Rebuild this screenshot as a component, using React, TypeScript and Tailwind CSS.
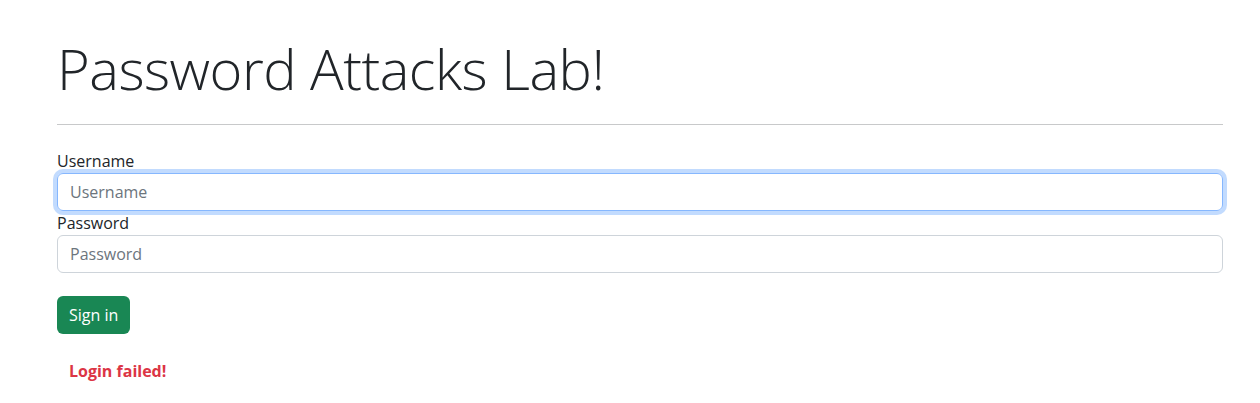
export default function App() {
  return (
    <div
      className="min-h-screen bg-white pl-[57px] pr-[37px] pt-[35px] text-[#212529]"
      style={{ fontFamily: '"Open Sans", "Noto Sans", sans-serif' }}
    >
      <h1 className="mb-2 text-[56px] font-light leading-[1.2] tracking-[-0.5px]">Password Attacks Lab!</h1>
      <hr className="mt-[22px] mb-[24px] border-t border-[#c8c9ca]" />

      <form onSubmit={(e) => e.preventDefault()}>
        <label htmlFor="username" className="block text-base leading-6">
          Username
        </label>
        <input
          id="username"
          type="text"
          placeholder="Username"
          className="block h-[38px] w-full rounded-md border border-[#86b7fe] px-3 text-base text-[#212529] shadow-[0_0_0_4px_rgba(13,110,253,0.25)] outline-none placeholder:text-[#6c757d]"
        />
        <label htmlFor="password" className="block text-base leading-6">
          Password
        </label>
        <input
          id="password"
          type="password"
          placeholder="Password"
          className="block h-[38px] w-full rounded-md border border-[#ced4da] px-3 text-base text-[#212529] outline-none placeholder:text-[#6c757d]"
        />

        <button
          type="submit"
          className="mt-[23px] h-[38px] rounded-md bg-[#198754] px-3 text-base text-white"
        >
          Sign in
        </button>
      </form>

      <p className="mt-[25px] px-3 text-base font-bold leading-6 text-[#dc3545]">Login failed!</p>
    </div>
  );
}
